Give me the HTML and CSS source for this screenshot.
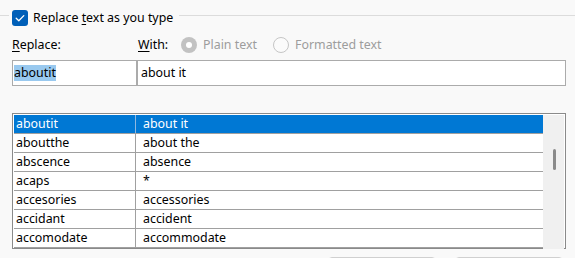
FILE: index.html
```html
<!DOCTYPE html>
<html>
<head>
<meta charset="utf-8">
<link rel="stylesheet" href="styles.css">
</head>
<body>
<div class="dialog">
  <div class="head">
    <span class="seg seg-left"></span>
    <label class="check-label">
      <span class="checkbox">
        <svg width="16" height="16" viewBox="0 0 16 16"><polyline points="4.2,8.2 6.8,10.8 11.8,5.6" fill="none" stroke="#fff" stroke-width="1.3" stroke-linecap="round" stroke-linejoin="round"/></svg>
      </span>
      <span class="check-text">Replace <u>t</u>ext as you type</span>
    </label>
    <span class="seg seg-right"></span>
  </div>

  <div class="labels">
    <span class="lbl-replace"><u>R</u>eplace:</span>
    <span class="lbl-with"><u>W</u>ith:</span>
    <span class="option opt-plain"><span class="radio radio-on"></span><span class="opt-text">Plain text</span></span>
    <span class="option"><span class="radio radio-off"></span><span class="opt-text">Formatted text</span></span>
  </div>

  <div class="inputs">
    <div class="field field-left"><span class="sel">aboutit</span></div>
    <div class="field field-right">about it</div>
  </div>

  <div class="list">
    <div class="rows">
      <div class="row selected"><span class="c1">aboutit</span><span class="c2">about it</span></div>
      <div class="row"><span class="c1">aboutthe</span><span class="c2">about the</span></div>
      <div class="row"><span class="c1">abscence</span><span class="c2">absence</span></div>
      <div class="row"><span class="c1">acaps</span><span class="c2">*</span></div>
      <div class="row"><span class="c1">accesories</span><span class="c2">accessories</span></div>
      <div class="row"><span class="c1">accidant</span><span class="c2">accident</span></div>
      <div class="row"><span class="c1">accomodate</span><span class="c2">accommodate</span></div>
    </div>
    <div class="scrollbar"><span class="thumb"></span></div>
  </div>

  <div class="buttons">
    <span class="btn"></span>
    <span class="btn"></span>
  </div>
</div>
</body>
</html>
```

FILE: styles.css
```css
html, body {
  margin: 0;
  padding: 0;
  background: #f9f9f9;
  overflow: hidden;
}
body {
  font-family: "Noto Sans", "Open Sans", sans-serif;
  font-size: 12.4px;
  color: #000;
  width: 575px;
  height: 258px;
}
u { text-decoration-thickness: 1px; text-underline-offset: 2px; }

.dialog { display: flex; flex-direction: column; }

.head {
  display: flex;
  align-items: flex-start;
  padding-top: 10px;
  height: 16px;
}
.seg { height: 1px; background: #dcdcdc; margin-top: 5px; }
.seg-left { width: 9px; margin-right: 3px; }
.seg-right { flex: 1; margin-left: 6px; }

.check-label { display: flex; align-items: center; height: 16px; }
.checkbox {
  width: 16px; height: 16px;
  background: #005fb8;
  border-radius: 3px;
  display: block;
}
.checkbox svg { display: block; }
.check-text { margin-left: 5px; line-height: 16px; white-space: nowrap; }

.labels {
  display: flex;
  align-items: center;
  height: 16px;
  margin-top: 11px;
  padding-left: 12px;
  line-height: 16px;
}
.lbl-replace { width: 126px; }
.lbl-with { width: 43px; }
.option { display: flex; align-items: center; color: #9d9d9d; }
.opt-plain { width: 92px; }
.opt-text { margin-left: 6px; }
.radio {
  width: 16px; height: 16px; border-radius: 50%;
  box-sizing: border-box;
  display: block;
}
.radio-on { background: #c2c2c2; position: relative; }
.radio-on::after {
  content: "";
  position: absolute;
  left: 5px; top: 5px;
  width: 6px; height: 6px;
  border-radius: 50%;
  background: #fff;
}
.radio-off { border: 1px solid #c6c6c6; background: #fbfbfb; }

.inputs {
  display: flex;
  margin-top: 7px;
  margin-left: 12px;
  width: 554px;
  height: 26px;
}
.field {
  box-sizing: border-box;
  height: 26px;
  border: 1px solid #ababab;
  background: #fff;
  display: flex;
  align-items: center;
  line-height: 16px;
  white-space: nowrap;
}
.field-left { width: 125px; padding-left: 1px; }
.field-right { flex: 1; padding-left: 3px; }
.sel { background: #99c9ef; }

.list {
  display: flex;
  box-sizing: border-box;
  margin-top: 27px;
  margin-left: 12px;
  width: 554px;
  height: 136px;
  border: 1px solid #8a8a8a;
  padding: 1px 1px 0 1px;
  background: #fff;
}
.rows { width: 529px; display: flex; flex-direction: column; }
.row {
  display: flex;
  height: 19px;
  box-sizing: border-box;
  border-bottom: 1px solid #a0a0a0;
  line-height: 18px;
  white-space: nowrap;
}
.c1 { width: 122px; box-sizing: border-box; padding-left: 2px; border-right: 1px solid #a0a0a0; }
.c2 { flex: 1; padding-left: 7px; }
.row.selected { background: #0078d4; color: #fff; }
.row.selected .c1 { border-right-color: #8fb8e0; }

.scrollbar {
  width: 21px;
  background: #f0f0f0;
  display: flex;
  justify-content: center;
  padding-top: 34px;
  box-sizing: border-box;
  height: 134px;
}
.thumb {
  display: block;
  width: 3px;
  height: 21px;
  background: #8a8a8a;
  border-radius: 2px;
  margin-left: 1px;
}

.buttons {
  display: flex;
  justify-content: flex-end;
  gap: 19px;
  margin-top: 8px;
  padding-right: 12px;
}
.btn {
  width: 108px;
  height: 24px;
  box-sizing: border-box;
  border: 1px solid #d0d0d0;
  border-radius: 4px;
  background: #fdfdfd;
}
```
